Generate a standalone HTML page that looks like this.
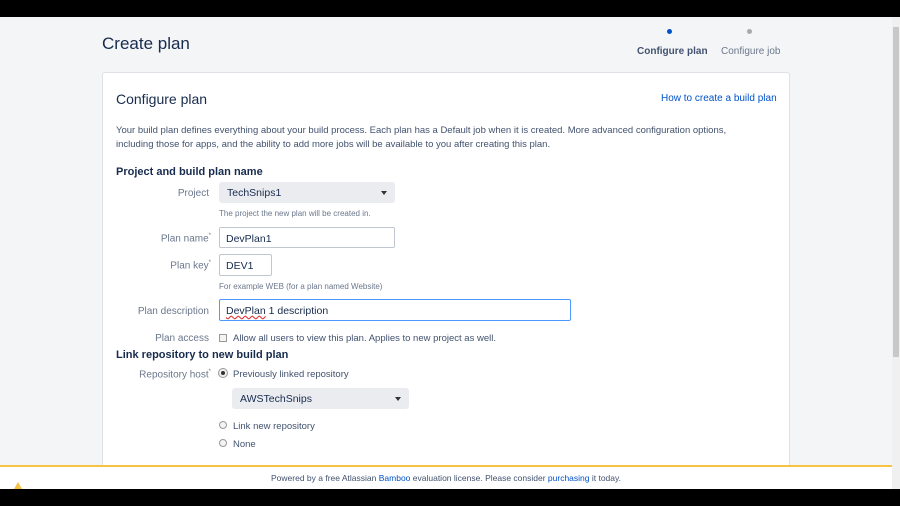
<!DOCTYPE html><html><head><style>
*{margin:0;padding:0;box-sizing:border-box}
body{width:900px;height:506px;overflow:hidden;background:#000;font-family:"Liberation Sans",sans-serif;color:#172b4d;position:relative}
.page{position:absolute;top:17px;left:0;width:892px;height:448px;background:#f4f5f7;overflow:hidden}
.sb{position:absolute;top:17px;left:892px;width:8px;height:472px;background:#f0f0f0}
.sb div{position:absolute;left:1px;top:10px;width:6px;height:330px;background:#c8c8c8}
.abs{position:absolute;white-space:nowrap}
.card{position:absolute;left:102px;top:55px;width:688px;height:420px;background:#fff;border:1px solid #dfe1e6;border-radius:3px}
.lbl{position:absolute;font-size:10px;color:#6b778c;text-align:right;width:108px;left:0}
.in{position:absolute;border:1px solid #c1c7d0;border-radius:2px;font-size:10.5px;padding:5px 6px;background:#fff;color:#172b4d}
.sel{position:absolute;background:#ebecf0;border-radius:3px;font-size:10.5px;padding:5px 8px}
.sel:after{content:"";position:absolute;right:8px;top:9px;border:3px solid transparent;border-top:4px solid #333}
.hint{position:absolute;font-size:8px;color:#6b778c}
.h{position:absolute;font-size:11px;font-weight:bold;color:#172b4d}
.cb{position:absolute;width:8px;height:8px;border:1px solid #999;background:#f4f4f4}
.rd{position:absolute;width:8px;height:8px;border:1px solid #999;border-radius:50%;background:#f4f4f4}
.t{position:absolute;font-size:9.5px;color:#42526e;white-space:nowrap}
</style></head><body>
<div class="page">
<div class="abs" style="left:102px;top:17px;font-size:17px;color:#172b4d">Create plan</div>
<div class="abs" style="left:667px;top:12px;width:5px;height:5px;border-radius:50%;background:#0052cc"></div>
<div class="abs" style="left:747px;top:12px;width:5px;height:5px;border-radius:50%;background:#aaa"></div>
<div class="abs" style="left:637px;top:29px;font-size:10px;font-weight:bold;color:#42526e">Configure plan</div>
<div class="abs" style="left:721px;top:29px;font-size:10px;color:#6b778c">Configure job</div>
<div class="card">
<div class="abs" style="left:13px;top:18px;font-size:14px">Configure plan</div>
<div class="abs" style="left:558px;top:20px;font-size:10px;color:#0052cc">How to create a build plan</div>
<div class="abs" style="left:13px;top:51px;font-size:9.5px;color:#42526e;line-height:14px;white-space:normal;width:650px">Your build plan defines everything about your build process. Each plan has a Default job when it is created. More advanced configuration options, including those for apps, and the ability to add more jobs will be available to you after creating this plan.</div>
<div class="h" style="left:13px;top:93px">Project and build plan name</div>
<div class="lbl" style="top:115px;width:106px">Project</div>
<div class="sel" style="left:116px;top:109px;width:176px;height:21px">TechSnips1</div>
<div class="hint" style="left:116px;top:136px">The project the new plan will be created in.</div>
<div class="lbl" style="top:160px">Plan name<sup style="font-size:6px">*</sup></div>
<div class="in" style="left:116px;top:154px;width:176px;height:21px">DevPlan1</div>
<div class="lbl" style="top:187px">Plan key<sup style="font-size:6px">*</sup></div>
<div class="in" style="left:116px;top:181px;width:53px;height:22px">DEV1</div>
<div class="hint" style="left:116px;top:209px">For example WEB (for a plan named Website)</div>
<div class="lbl" style="top:233px;width:106px">Plan description</div>
<div class="in" style="left:116px;top:226px;width:352px;height:22px;border-color:#4c9aff"><span style="text-decoration:underline wavy #d33">DevPlan</span> 1 description</div>
<div class="lbl" style="top:260px;width:106px">Plan access</div>
<div class="cb" style="left:116px;top:261px"></div>
<div class="t" style="left:130px;top:260px">Allow all users to view this plan. Applies to new project as well.</div>
<div class="h" style="left:13px;top:276px">Link repository to new build plan</div>
<div class="lbl" style="top:296px">Repository host<sup style="font-size:6px">*</sup></div>
<div class="rd" style="left:116px;top:296px;background:#333;border:2px solid #eee;box-shadow:0 0 0 1px #999"></div>
<div class="t" style="left:130px;top:296px">Previously linked repository</div>
<div class="sel" style="left:129px;top:315px;width:177px;height:21px">AWSTechSnips</div>
<div class="rd" style="left:116px;top:348px"></div>
<div class="t" style="left:130px;top:348px">Link new repository</div>
<div class="rd" style="left:116px;top:366px"></div>
<div class="t" style="left:130px;top:366px">None</div>
</div>
</div>
<div class="abs" style="left:0;top:465px;width:892px;height:24px;background:#fff;border-top:2px solid #f6c342;font-size:8.5px;color:#42526e;text-align:center;line-height:22px">Powered by a free Atlassian <span style="color:#0052cc">Bamboo</span> evaluation license. Please consider <span style="color:#0052cc">purchasing</span> it today.</div>
<div class="abs" style="left:14px;top:482px;border:4px solid transparent;border-bottom:7px solid #f6c342;border-top:0"></div>
<div class="sb"><div></div></div>
</body></html>
